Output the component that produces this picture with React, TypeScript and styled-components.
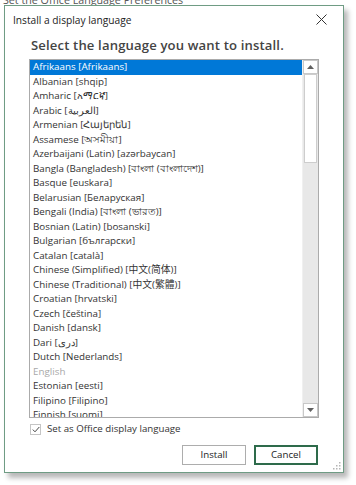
import styled, { createGlobalStyle } from "styled-components";

const GlobalStyle = createGlobalStyle`
  html, body {
    margin: 0;
    padding: 0;
    background: #ffffff;
  }
  body {
    font-family: "Open Sans", "Noto Sans", "Noto Sans CJK SC", sans-serif;
  }
`;

const Page = styled.div`
  width: 356px;
  height: 485px;
  overflow: hidden;
`;

const BackText = styled.div`
  height: 5px;
  overflow: hidden;
  padding-left: 3px;
  font-size: 10.7px;
  line-height: 12px;
  color: #555;
  & > span {
    display: block;
    margin-top: -6px;
  }
`;

const Dialog = styled.div`
  margin-left: 4px;
  width: 338px;
  height: 466px;
  border: 1px solid #6f9c84;
  background: #ffffff;
  box-shadow: 4px 5px 5px rgba(0, 0, 0, 0.28);
  display: flex;
  flex-direction: column;
  position: relative;
`;

const TitleBar = styled.div`
  height: 27px;
  display: flex;
  align-items: center;
  justify-content: space-between;
  padding: 0 16px 0 8px;
`;

const Title = styled.span`
  font-size: 10.2px;
  color: #222;
`;

const CloseIcon = styled.svg`
  width: 11px;
  height: 11px;
`;

const Heading = styled.h1`
  margin: 0 0 0 26px;
  font-size: 13.1px;
  line-height: 24px;
  font-weight: 600;
  color: #444;
  letter-spacing: 0.15px;
`;

const ListBox = styled.div`
  margin: 2px 0 0 24px;
  width: 288px;
  height: 357px;
  border: 1px solid #ababab;
  display: flex;
  overflow: hidden;
`;

const Items = styled.div`
  flex: 1;
  overflow: hidden;
`;

const Item = styled.div<{ $selected?: boolean; $disabled?: boolean }>`
  height: 14.5px;
  line-height: 14.5px;
  padding-left: 3px;
  font-size: 9.8px;
  white-space: nowrap;
  overflow: hidden;
  background: ${(p) => (p.$selected ? "#0078d7" : "transparent")};
  color: ${(p) => (p.$selected ? "#ffffff" : p.$disabled ? "#a8a8a8" : "#333")};
`;

const ScrollBar = styled.div`
  width: 15px;
  display: flex;
  flex-direction: column;
  background: #e8e8e8;
  border-left: 1px solid #f0f0f0;
`;

const ScrollButton = styled.div`
  height: 14px;
  background: #ffffff;
  border: 1px solid #c8c8c8;
  display: flex;
  align-items: center;
  justify-content: center;
  box-sizing: border-box;
`;

const Thumb = styled.div`
  height: 89px;
  background: #ffffff;
  border: 1px solid #cdcdcd;
  box-sizing: border-box;
  margin: 0 1px;
`;

const Track = styled.div`
  flex: 1;
`;

const CheckRow = styled.label`
  margin: 4px 0 0 25px;
  display: flex;
  align-items: center;
  gap: 6px;
  font-size: 9.7px;
  line-height: 14px;
  color: #333;
  height: 14px;
`;

const CheckBox = styled.span`
  width: 9px;
  height: 9px;
  border: 1px solid #c5c5c5;
  display: flex;
  align-items: center;
  justify-content: center;
  background: #fff;
`;

const ButtonRow = styled.div`
  margin-top: 9px;
  padding-right: 25px;
  display: flex;
  justify-content: flex-end;
  gap: 8px;
`;

const Button = styled.button<{ $primary?: boolean }>`
  width: 64px;
  height: 20px;
  box-sizing: border-box;
  background: #ffffff;
  border: ${(p) => (p.$primary ? "2px solid #2e6b4b" : "1px solid #adadad")};
  font-family: inherit;
  font-size: 9.7px;
  color: #222;
  padding: 0;
  line-height: 1;
`;

const Grip = styled.svg`
  position: absolute;
  right: 2px;
  bottom: 2px;
  width: 8px;
  height: 8px;
`;

const languages: { name: string; disabled?: boolean }[] = [
  { name: "Afrikaans [Afrikaans]" },
  { name: "Albanian [shqip]" },
  { name: "Amharic [አማርኛ]" },
  { name: "Arabic [العربية]" },
  { name: "Armenian [Հայերեն]" },
  { name: "Assamese [অসমীয়া]" },
  { name: "Azerbaijani (Latin) [azərbaycan]" },
  { name: "Bangla (Bangladesh) [বাংলা (বাংলাদেশ)]" },
  { name: "Basque [euskara]" },
  { name: "Belarusian [Беларуская]" },
  { name: "Bengali (India) [বাংলা (ভারত)]" },
  { name: "Bosnian (Latin) [bosanski]" },
  { name: "Bulgarian [български]" },
  { name: "Catalan [català]" },
  { name: "Chinese (Simplified) [中文(简体)]" },
  { name: "Chinese (Traditional) [中文(繁體)]" },
  { name: "Croatian [hrvatski]" },
  { name: "Czech [čeština]" },
  { name: "Danish [dansk]" },
  { name: "Dari [دری]" },
  { name: "Dutch [Nederlands]" },
  { name: "English", disabled: true },
  { name: "Estonian [eesti]" },
  { name: "Filipino [Filipino]" },
  { name: "Finnish [suomi]" },
];

export default function App() {
  return (
    <Page>
      <GlobalStyle />
      <BackText>
        <span>Set the Office Language Preferences</span>
      </BackText>
      <Dialog>
        <TitleBar>
          <Title>Install a display language</Title>
          <CloseIcon viewBox="0 0 11 11">
            <path d="M0.5 0.5 L10.5 10.5 M10.5 0.5 L0.5 10.5" stroke="#333" strokeWidth="1" />
          </CloseIcon>
        </TitleBar>
        <Heading>Select the language you want to install.</Heading>
        <ListBox>
          <Items>
            {languages.map((l, i) => (
              <Item key={l.name} $selected={i === 0} $disabled={l.disabled}>
                {l.name}
              </Item>
            ))}
          </Items>
          <ScrollBar>
            <ScrollButton>
              <svg width="7" height="4" viewBox="0 0 7 4">
                <path d="M0 4 L3.5 0 L7 4 Z" fill="#606060" />
              </svg>
            </ScrollButton>
            <Thumb />
            <Track />
            <ScrollButton>
              <svg width="7" height="4" viewBox="0 0 7 4">
                <path d="M0 0 L3.5 4 L7 0 Z" fill="#606060" />
              </svg>
            </ScrollButton>
          </ScrollBar>
        </ListBox>
        <CheckRow>
          <CheckBox>
            <svg width="8" height="7" viewBox="0 0 8 7">
              <path d="M0.8 3.6 L3 5.8 L7.3 1" fill="none" stroke="#444" strokeWidth="1" />
            </svg>
          </CheckBox>
          Set as Office display language
        </CheckRow>
        <ButtonRow>
          <Button>Install</Button>
          <Button $primary>Cancel</Button>
        </ButtonRow>
        <Grip viewBox="0 0 8 8">
          <rect x="6" y="0" width="1.5" height="1.5" fill="#b5b5b5" />
          <rect x="3" y="3" width="1.5" height="1.5" fill="#b5b5b5" />
          <rect x="6" y="3" width="1.5" height="1.5" fill="#b5b5b5" />
          <rect x="0" y="6" width="1.5" height="1.5" fill="#b5b5b5" />
          <rect x="3" y="6" width="1.5" height="1.5" fill="#b5b5b5" />
          <rect x="6" y="6" width="1.5" height="1.5" fill="#b5b5b5" />
        </Grip>
      </Dialog>
    </Page>
  );
}
